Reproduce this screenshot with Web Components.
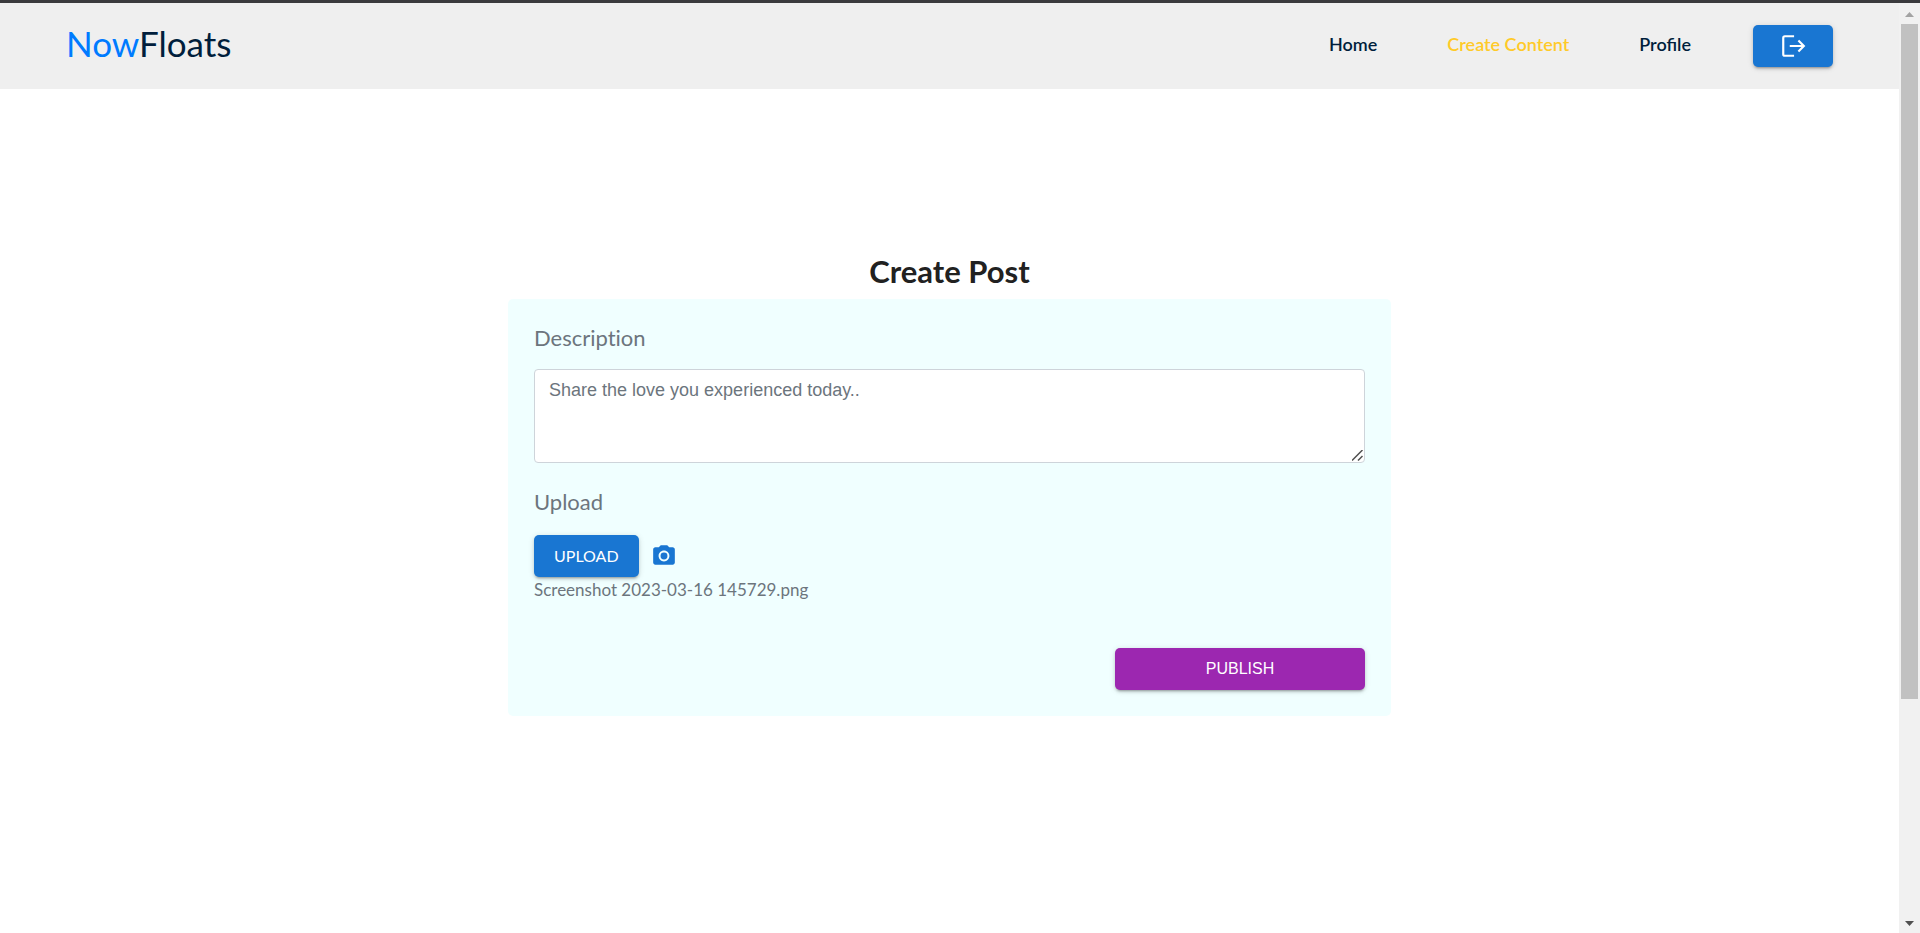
<!DOCTYPE html>
<html lang="en">
<head>
<meta charset="utf-8">
<meta name="viewport" content="width=device-width, initial-scale=1">
<title>NowFloats</title>
<style>
    html, body {
        height: 100%;
        margin: 0;
    }

    body {
        font-family: Lato, "Open Sans", sans-serif;
        font-size: 18px;
        line-height: 24px;
        color: #212121;
        background-color: #ffffff;
    }
</style>
</head>
<body>

<app-shell>
    <nav-bar slot="header">
        <nav-link href="#home">Home</nav-link>
        <nav-link href="#create" active>Create Content</nav-link>
        <nav-link href="#profile">Profile</nav-link>
    </nav-bar>
    <post-form heading="Create Post"></post-form>
</app-shell>

<script>
const makeTemplate = (html) => {
    const template = document.createElement('template');
    template.innerHTML = html;
    return template;
};

class BaseElement extends HTMLElement {
    constructor() {
        super();
        this.attachShadow({mode: 'open'});
        this.shadowRoot.appendChild(this.constructor.template.content.cloneNode(true));
    }
}

class AppShell extends BaseElement {
    static template = makeTemplate(`
        <style>
            :host {
                display: grid;
                grid-template-columns: 1fr auto;
                min-height: 100vh;
                box-sizing: border-box;
                border-top: 3px solid #3a3a3d;
            }

            .page {
                display: flex;
                flex-direction: column;
            }

            main {
                display: flex;
                justify-content: center;
                padding: 160px 24px 24px;
            }
        </style>

        <div class="page">
            <slot name="header"></slot>
            <main><slot></slot></main>
        </div>
        <scroll-track></scroll-track>
    `);
}

class ScrollTrack extends BaseElement {
    static template = makeTemplate(`
        <style>
            :host {
                display: flex;
                flex-direction: column;
                align-items: center;
                width: 21px;
                background-color: #f1f1f1;
            }

            svg {
                display: block;
                flex: none;
            }

            .rail {
                flex: 1;
                width: 17px;
            }

            .thumb {
                height: 76%;
                background-color: #c1c1c1;
            }
        </style>

        <svg width="21" height="21" viewBox="0 0 21 21" aria-hidden="true"><path d="M6 14h9l-4.500-5z" fill="#a3a3a3"/></svg>
        <div class="rail"><div class="thumb"></div></div>
        <svg width="21" height="21" viewBox="0 0 21 21" aria-hidden="true"><path d="M6 9h9l-4.500 5z" fill="#505050"/></svg>
    `);
}

class NavBar extends BaseElement {
    static template = makeTemplate(`
        <style>
            :host {
                display: block;
                background-color: #efefef;
            }

            header {
                display: flex;
                align-items: center;
                justify-content: space-between;
                padding: 22px 66px;
            }

            .brand {
                padding-bottom: 6px;
                font-size: 35px;
                line-height: 36px;
                color: #001e3c;
                text-decoration: none;
            }

            .brand span {
                color: #007bff;
            }

            nav {
                display: flex;
                align-items: center;
                gap: 62px;
            }

            .links {
                display: flex;
                gap: 70px;
                padding-bottom: 4px;
            }

            app-button {
                width: 80px;
            }
        </style>

        <header>
            <a class="brand" href="#"><span>Now</span>Floats</a>
            <nav>
                <div class="links"><slot></slot></div>
                <app-button label="Log out">
                    <svg width="26" height="26" viewBox="0 0 24 24" fill="none" stroke="#ffffff" stroke-width="2" aria-hidden="true">
                        <path d="M13 3H4.500Q3 3 3 4.500v15Q3 21 4.500 21H13M9 12h13M17 7l5 5l-5 5"/>
                    </svg>
                </app-button>
            </nav>
        </header>
    `);
}

class NavLink extends BaseElement {
    static template = makeTemplate(`
        <style>
            :host {
                display: block;
            }

            a {
                font-weight: 600;
                color: #001e3c;
                text-decoration: none;
            }

            :host([active]) a {
                color: #ffca28;
            }
        </style>

        <a><slot></slot></a>
    `);

    connectedCallback() {
        const link = this.shadowRoot.querySelector('a');
        link.href = this.getAttribute('href');
        if (this.hasAttribute('active')) {
            link.setAttribute('aria-current', 'page');
        }
    }
}

class AppButton extends BaseElement {
    static template = makeTemplate(`
        <style>
            :host {
                display: block;
            }

            button {
                display: flex;
                align-items: center;
                justify-content: center;
                width: 100%;
                height: 42px;
                padding: 0 20px;
                border: 0;
                border-radius: 5px;
                font-family: inherit;
                font-size: 16px;
                line-height: 24px;
                text-transform: uppercase;
                color: #ffffff;
                background-color: var(--button-color, #1976d2);
                box-shadow: 0 3px 2px -2px rgba(0, 0, 0, 0.2), 0 2px 3px rgba(0, 0, 0, 0.14), 0 1px 6px rgba(0, 0, 0, 0.12);
                cursor: pointer;
            }
        </style>

        <button type="button"><slot></slot></button>
    `);

    connectedCallback() {
        if (this.hasAttribute('label')) {
            this.shadowRoot.querySelector('button').setAttribute('aria-label', this.getAttribute('label'));
        }
    }
}

class PostForm extends BaseElement {
    static template = makeTemplate(`
        <style>
            :host {
                display: block;
                width: 100%;
                max-width: 883px;
            }

            h1 {
                margin: 0 0 6px;
                font-size: 31px;
                line-height: 44px;
                font-weight: 700;
                text-align: center;
            }

            form {
                display: flex;
                flex-direction: column;
                padding: 26px;
                border-radius: 5px;
                color: #6c757d;
                background-color: #f0ffff;
            }

            .title {
                margin-bottom: 18px;
                font-size: 22px;
                line-height: 26px;
                font-variant-ligatures: none;
            }

            .text-box {
                position: relative;
                margin-bottom: 26px;
            }

            textarea {
                display: block;
                box-sizing: border-box;
                width: 100%;
                height: 94px;
                padding: 6px 14px;
                border: 1px solid #ced4da;
                border-radius: 4px;
                font-family: "Liberation Sans", Arial, sans-serif;
                font-size: 18px;
                line-height: 28px;
                resize: vertical;
            }

            textarea::placeholder {
                color: #6c757d;
            }

            textarea::-webkit-resizer {
                background: none;
            }

            /* grip drawn over the corner of the textarea */
            .grip {
                position: absolute;
                right: 2px;
                bottom: 2px;
                pointer-events: none;
            }

            .upload {
                display: flex;
                align-items: center;
                gap: 12px;
                padding-top: 2px;
            }

            .camera {
                display: flex;
                padding: 0;
                border: 0;
                background: none;
                cursor: pointer;
            }

            .file {
                font-size: 17px;
                line-height: 26px;
            }

            .publish {
                width: 250px;
                margin: 45px 0 0 auto;
                font-family: "Liberation Sans", Arial, sans-serif;
                --button-color: #9c27b0;
            }
        </style>

        <h1></h1>
        <form>
            <label class="title" for="description">Description</label>
            <div class="text-box">
                <textarea id="description" placeholder="Share the love you experienced today.."></textarea>
                <svg class="grip" width="11" height="11" viewBox="0 0 11 11" stroke="#505050" stroke-width="1.500" aria-hidden="true">
                    <path d="M0 10.500L10.500 0M6 10.500L10.500 6"/>
                </svg>
            </div>
            <div class="title">Upload</div>
            <div class="upload">
                <app-button>Upload</app-button>
                <button class="camera" type="button" aria-label="Upload picture">
                    <svg width="26" height="26" viewBox="0 0 24 24" fill="#1976d2" aria-hidden="true">
                        <path d="M9 2 7.170 4H4c-1.100 0-2 .9-2 2v12c0 1.100.9 2 2 2h16c1.100 0 2-.9 2-2V6c0-1.100-.9-2-2-2h-3.170L15 2zm3 15c-2.760 0-5-2.240-5-5s2.240-5 5-5 5 2.240 5 5-2.240 5-5 5z"/>
                        <circle cx="12" cy="12" r="3.200"/>
                    </svg>
                </button>
            </div>
            <div class="file">Screenshot 2023-03-16 145729.png</div>
            <app-button class="publish">Publish</app-button>
        </form>
    `);

    connectedCallback() {
        this.shadowRoot.querySelector('h1').textContent = this.getAttribute('heading');
    }
}

customElements.define('scroll-track', ScrollTrack);
customElements.define('app-button', AppButton);
customElements.define('nav-link', NavLink);
customElements.define('nav-bar', NavBar);
customElements.define('post-form', PostForm);
customElements.define('app-shell', AppShell);
</script>
</body>
</html>
